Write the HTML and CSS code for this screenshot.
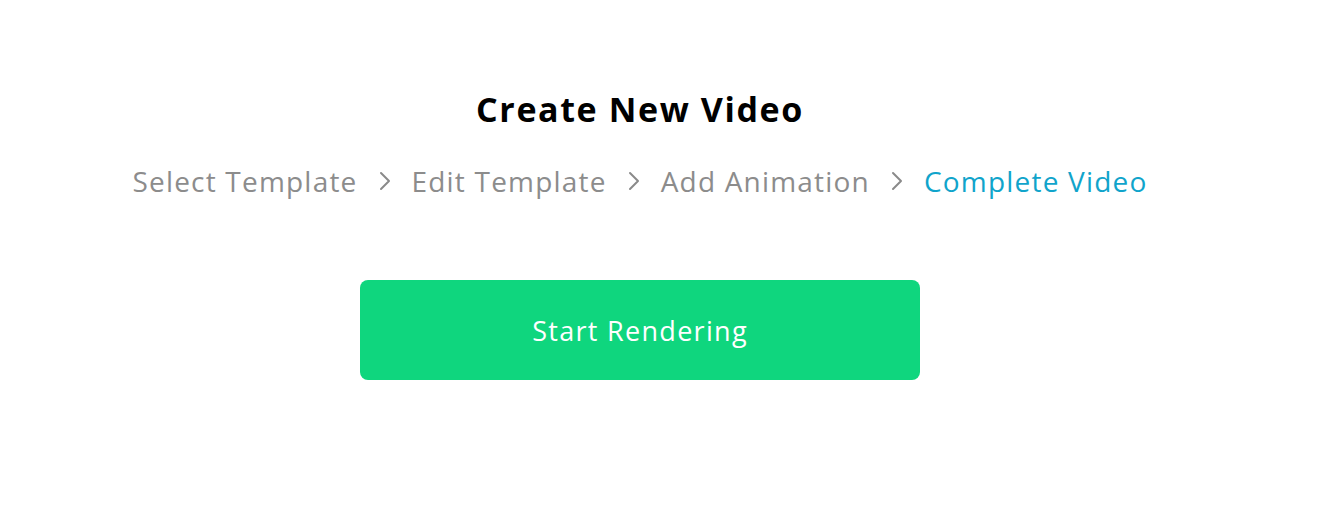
FILE: index.html
```html
<!DOCTYPE html>
<html lang="en">
<head>
<meta charset="utf-8">
<title>Create New Video</title>
<link rel="stylesheet" href="styles.css">
</head>
<body>
<main class="page">
  <h1 class="title">Create New Video</h1>
  <nav class="steps">
    <span class="step">Select Template</span>
    <svg class="chev" viewBox="0 0 12 20" width="12" height="20"><polyline points="2,2 10,10 2,18" fill="none" stroke="#8a8a8a" stroke-width="2" stroke-linecap="round" stroke-linejoin="round"/></svg>
    <span class="step">Edit Template</span>
    <svg class="chev" viewBox="0 0 12 20" width="12" height="20"><polyline points="2,2 10,10 2,18" fill="none" stroke="#8a8a8a" stroke-width="2" stroke-linecap="round" stroke-linejoin="round"/></svg>
    <span class="step">Add Animation</span>
    <svg class="chev" viewBox="0 0 12 20" width="12" height="20"><polyline points="2,2 10,10 2,18" fill="none" stroke="#8a8a8a" stroke-width="2" stroke-linecap="round" stroke-linejoin="round"/></svg>
    <span class="step active">Complete Video</span>
  </nav>
  <button class="render-btn" type="button">Start Rendering</button>
</main>
</body>
</html>
```
FILE: styles.css
```css
html, body {
  margin: 0;
  padding: 0;
  background: #ffffff;
}
body {
  font-family: "Open Sans", "Liberation Sans", sans-serif;
}
.page {
  width: 1280px;
  display: flex;
  flex-direction: column;
  align-items: center;
  padding-top: 88px;
}
.title {
  margin: 0;
  font-size: 34px;
  line-height: 42px;
  font-weight: 700;
  letter-spacing: 1.6px;
  color: #000000;
}
.steps {
  margin-top: 33px;
  display: flex;
  align-items: center;
  gap: 21px;
}
.step {
  font-size: 28px;
  line-height: 36px;
  letter-spacing: 1.2px;
  color: #8c8c8c;
  font-weight: 400;
}
.step.active {
  color: #10a4cb;
}
.chev {
  display: block;
}
.render-btn {
  margin-top: 81px;
  width: 560px;
  height: 100px;
  border: none;
  border-radius: 8px;
  background: #0fd67e;
  color: #ffffff;
  font-family: inherit;
  font-size: 27px;
  letter-spacing: 1.3px;
  font-weight: 400;
  cursor: pointer;
}
```
